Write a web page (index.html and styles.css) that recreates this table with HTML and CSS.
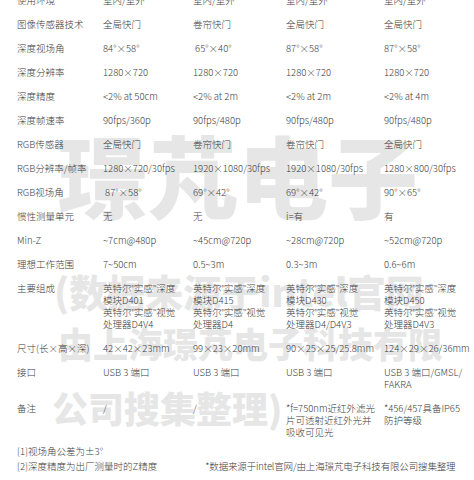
FILE: index.html
```html
<!DOCTYPE html>
<html lang="zh">
<head>
<meta charset="utf-8">
<link rel="stylesheet" href="styles.css">
</head>
<body>
<div class="page">
  <div class="watermark">
    <div class="wm wm1">璟芃电子</div>
    <div class="wm wm2">(数据来源于intel官网</div>
    <div class="wm wm3">由上海璟芃电子科技有限</div>
    <div class="wm wm4">公司搜集整理)</div>
  </div>
  <div class="spec">
    <div class="c">使用环境</div><div class="c">室内/室外</div><div class="c">室内/室外</div><div class="c">室内/室外</div><div class="c">室内/室外</div>
    <div class="c">图像传感器技术</div><div class="c">全局快门</div><div class="c">卷帘快门</div><div class="c">全局快门</div><div class="c">全局快门</div>
    <div class="c">深度视场角</div><div class="c">84°×58°</div><div class="c">&nbsp;65°×40°</div><div class="c">87°×58°</div><div class="c">87°×58°</div>
    <div class="c">深度分辨率</div><div class="c">1280×720</div><div class="c">1280×720</div><div class="c">1280×720</div><div class="c">1280×720</div>
    <div class="c">深度精度</div><div class="c">&lt;2% at 50cm</div><div class="c">&lt;2% at 2m</div><div class="c">&lt;2% at 2m</div><div class="c">&lt;2% at 4m</div>
    <div class="c">深度帧速率</div><div class="c">90fps/360p</div><div class="c">90fps/480p</div><div class="c">90fps/480p</div><div class="c">90fps/480p</div>
    <div class="c">RGB传感器</div><div class="c">全局快门</div><div class="c">卷帘快门</div><div class="c">卷帘快门</div><div class="c">全局快门</div>
    <div class="c">RGB分辨率/帧率</div><div class="c">1280×720/30fps</div><div class="c">1920×1080/30fps</div><div class="c">1920×1080/30fps</div><div class="c">1280×800/30fps</div>
    <div class="c">RGB视场角</div><div class="c">&nbsp;87°×58°</div><div class="c">69°×42°</div><div class="c">69°×42°</div><div class="c">90°×65°</div>
    <div class="c">惯性测量单元</div><div class="c">无</div><div class="c">无</div><div class="c">i=有</div><div class="c">有</div>
    <div class="c">Min-Z</div><div class="c">~7cm@480p</div><div class="c">~45cm@720p</div><div class="c">~28cm@720p</div><div class="c">~52cm@720p</div>
    <div class="c">理想工作范围</div><div class="c">7~50cm</div><div class="c">0.5~3m</div><div class="c">0.3~3m</div><div class="c">0.6~6m</div>
    <div class="c">主要组成</div>
    <div class="c">英特尔<sup>®</sup>实感<sup>™</sup>深度<br>模块D401<br>英特尔<sup>®</sup>实感<sup>™</sup>视觉<br>处理器D4V4</div>
    <div class="c">英特尔<sup>®</sup>实感<sup>™</sup>深度<br>模块D415<br>英特尔<sup>®</sup>实感<sup>™</sup>视觉<br>处理器D4</div>
    <div class="c">英特尔<sup>®</sup>实感<sup>™</sup>深度<br>模块D430<br>英特尔<sup>®</sup>实感<sup>™</sup>视觉<br>处理器D4/D4V3</div>
    <div class="c">英特尔<sup>®</sup>实感<sup>™</sup>深度<br>模块D450<br>英特尔<sup>®</sup>实感<sup>™</sup>视觉<br>处理器D4V3</div>
    <div class="c">尺寸(长×高×深)</div><div class="c">42×42×23mm</div><div class="c">99×23×20mm</div><div class="c">90×25×25/25.8mm</div><div class="c">124×29×26/36mm</div>
    <div class="c">接口</div><div class="c">USB 3 端口</div><div class="c">USB 3 端口</div><div class="c">USB 3 端口</div><div class="c">USB 3 端口/GMSL/<br>FAKRA</div>
    <div class="c">备注</div><div class="c">/</div><div class="c">/</div><div class="c">*f=750nm近红外滤光<br>片可透射近红外光并<br>吸收可见光</div><div class="c">*456/457具备IP65<br>防护等级</div>
  </div>
  <div class="notes">
    <div class="note">[1]视场角公差为±3°</div>
    <div class="note note-row"><span>[2]深度精度为出厂测量时的Z精度</span><span class="source">*数据来源于intel官网/由上海璟芃电子科技有限公司搜集整理</span></div>
  </div>
</div>
</body>
</html>
```

FILE: styles.css
```css
html, body {
  margin: 0;
  padding: 0;
}
html {
  background: #ffffff;
}
body {
  font-family: "Noto Sans CJK SC", "Noto Sans", sans-serif;
  color: #3c3c3c;
  font-weight: 300;
  overflow: hidden;
  width: 474px;
  height: 480px;
}
.page {
  position: relative;
  z-index: 0;
  width: 474px;
  height: 480px;
  overflow: hidden;
}
.spec {
  display: grid;
  grid-template-columns: 86px 90px 93px 98px 1fr;
  padding-left: 17px;
  margin-top: -12px;
  font-size: 9.5px;
  line-height: 12px;
}
.c {
  padding: 6px 0;
  white-space: nowrap;
}
.c sup {
  font-size: 5px;
  line-height: 0;
  vertical-align: 3px;
}
.notes {
  padding-left: 17px;
  font-size: 9.5px;
  line-height: 15px;
}
.note-row {
  display: flex;
}
.source {
  margin-left: 48px;
  letter-spacing: -0.15px;
}
.watermark {
  position: absolute;
  left: 0;
  top: 0;
  width: 474px;
  height: 480px;
  z-index: -1;
  color: #e6e6e6;
  font-weight: 900;
}
.wm {
  position: absolute;
  white-space: nowrap;
}
.wm1 {
  left: 58px;
  top: 118px;
  font-size: 90px;
  line-height: 110px;
}
.wm2 {
  left: 54px;
  top: 266px;
  font-size: 38px;
  line-height: 50px;
}
.wm3 {
  left: 58px;
  top: 318px;
  font-size: 35px;
  line-height: 50px;
}
.wm4 {
  left: 52px;
  top: 382px;
  font-size: 36px;
  line-height: 50px;
}
```
